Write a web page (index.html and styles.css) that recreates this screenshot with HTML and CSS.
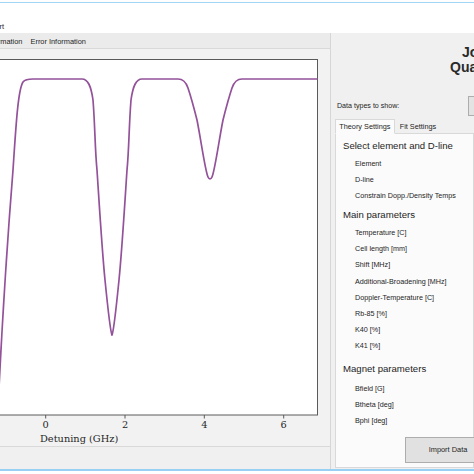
FILE: index.html
```html
<!DOCTYPE html>
<html>
<head>
<meta charset="utf-8">
<link rel="stylesheet" href="styles.css">
</head>
<body>
<div class="frame">
  <div class="menubar"><span class="menu-item">Import</span></div>
  <div class="main">
    <div class="left">
      <div class="tabbar">
        <span class="tab tab-first">Information</span>
        <span class="tab">Error Information</span>
      </div>
      <div class="pane">
        <svg class="figure" width="330" height="397" viewBox="0 49 330 397" xmlns="http://www.w3.org/2000/svg">
          <defs>
            <clipPath id="axclip"><rect x="-10" y="60" width="327.5" height="355"/></clipPath>
          </defs>
          <rect x="-10" y="59.5" width="327.5" height="355.5" fill="#ffffff" stroke="#5a5a5a" stroke-width="1"/>
          <path clip-path="url(#axclip)" fill="none" stroke="#93529a" stroke-width="1.7" stroke-linejoin="round"
            d="M -3 430 C 1 340, 9 220, 13 170 C 16 125, 18 90, 23 82 C 25 79.5, 28 79, 33 79 L 82 79 C 88 79, 91 86, 93 100 C 95 125, 95 150, 97 170 C 99 200, 102 250, 105 280 C 108 310, 110.5 332, 112 335 C 113.5 332, 116 310, 119 280 C 122 250, 125 200, 127 170 C 129 150, 129 125, 131 100 C 133 86, 136 79, 142 79 L 178 79 C 183 79, 186 82, 188 88 C 192 100, 195 112, 197 120 C 201 140, 205 170, 208 177 C 209 179.5, 211 179.5, 212 177 C 215 170, 219 140, 223 120 C 225 112, 228 100, 232 88 C 234 82, 237 79, 242 79 L 330 79"/>
          <g stroke="#5a5a5a" stroke-width="1">
            <line x1="45.7" y1="415" x2="45.7" y2="418.5"/>
            <line x1="125" y1="415" x2="125" y2="418.5"/>
            <line x1="204.3" y1="415" x2="204.3" y2="418.5"/>
            <line x1="283.7" y1="415" x2="283.7" y2="418.5"/>
          </g>
          <g class="ticklabels" text-anchor="middle">
            <text x="45.7" y="428">0</text>
            <text x="125" y="428">2</text>
            <text x="204.3" y="428">4</text>
            <text x="283.7" y="428">6</text>
          </g>
          <text class="xlabel" x="40" y="442">Detuning (GHz)</text>
        </svg>
      </div>
    </div>
    <div class="right">
      <div class="title">
        <div class="t1">Joint</div>
        <div class="t2">Quantum Centre</div>
      </div>
      <div class="datarow">
        <span class="datalabel">Data types to show:</span>
        <span class="combo"></span>
      </div>
      <div class="tabs2">
        <span class="tab2 active">Theory Settings</span>
        <span class="tab2">Fit Settings</span>
      </div>
      <div class="settings">
        <div class="grp-h h-first">Select element and D-line</div>
        <div class="items items-a">
          <div class="item">Element</div>
          <div class="item">D-line</div>
          <div class="item">Constrain Dopp./Density Temps</div>
        </div>
        <div class="grp-h h-second">Main parameters</div>
        <div class="items items-b">
          <div class="item">Temperature [C]</div>
          <div class="item">Cell length [mm]</div>
          <div class="item">Shift [MHz]</div>
          <div class="item">Additional-Broadening [MHz]</div>
          <div class="item">Doppler-Temperature [C]</div>
          <div class="item">Rb-85 [%]</div>
          <div class="item">K40 [%]</div>
          <div class="item">K41 [%]</div>
        </div>
        <div class="grp-h h-third">Magnet parameters</div>
        <div class="items items-c">
          <div class="item">Bfield [G]</div>
          <div class="item">Btheta [deg]</div>
          <div class="item">Bphi [deg]</div>
        </div>
        <div class="import-btn">Import Data</div>
      </div>
    </div>
  </div>
</div>
</body>
</html>
```

FILE: styles.css
```css
html, body {
  margin: 0;
  padding: 0;
  background: #ffffff;
}

body {
  font-family: "Liberation Sans", Arial, sans-serif;
  color: #1e1e1e;
}

.frame {
  width: 474px;
  height: 474px;
  overflow: hidden;
  padding-top: 2px;
  box-sizing: border-box;
}

.menubar {
  height: 30px;
  border-top: 1px solid #a3d6f4;
  background: #ffffff;
  overflow: hidden;
  white-space: nowrap;
}

.menu-item {
  display: block;
  margin-top: 18px;
  margin-left: -17px;
  font-size: 7.4px;
  line-height: 12px;
  color: #1e1e1e;
}

.main {
  display: flex;
  height: 436px;
  background: #f0f0f0;
  border-bottom: 2px solid #97d0f3;
}

.left {
  flex: none;
  width: 330px;
  display: flex;
  flex-direction: column;
  border-right: 1px solid #d6d6d6;
}

.tabbar {
  height: 15px;
  display: flex;
  background: #ebebeb;
  border-bottom: 1px solid #d9d9d9;
  font-size: 7.4px;
  white-space: nowrap;
  overflow: hidden;
}

.tab {
  padding: 3px 4px 0 4px;
  line-height: 12px;
  color: #1e1e1e;
}

.tab-first {
  margin-left: -18.5px;
}

.pane {
  height: 397px;
  border-bottom: 1px solid #d9d9d9;
  background: #f2f2f2;
  overflow: hidden;
}

.figure {
  display: block;
}

.ticklabels text,
.xlabel {
  font-family: "DejaVu Serif", serif;
  font-size: 9.8px;
  fill: #262626;
}

.right {
  flex: 1;
  min-width: 0;
  overflow: hidden;
  white-space: nowrap;
}

.title {
  padding-top: 11.5px;
  font-size: 14px;
  line-height: 15px;
  font-weight: bold;
  color: #2a2a2a;
}

.t1 {
  padding-left: 131px;
}

.t2 {
  padding-left: 119px;
}

.datarow {
  display: flex;
  align-items: center;
  height: 20px;
  margin-top: 21.2px;
  padding-left: 6px;
  font-size: 7.1px;
}

.datalabel {
  flex: none;
  width: 131px;
}

.combo {
  flex: none;
  width: 60px;
  height: 18px;
  border: 1px solid #adadad;
  background: #e3e3e3;
}

.tabs2 {
  display: flex;
  margin-top: 3.6px;
  margin-left: 4px;
  margin-bottom: -1px;
  font-size: 7.3px;
}

.tab2 {
  height: 11px;
  line-height: 11px;
  padding: 1px 4px 2px 4px;
  border: 1px solid transparent;
  border-bottom: none;
  color: #1e1e1e;
}

.tab2.active {
  position: relative;
  z-index: 1;
  background: #fbfbfb;
  border-color: #d9d9d9;
  border-bottom: 1px solid #fbfbfb;
  height: 11px;
  padding: 1px 3.3px 1px 3.3px;
}

.settings {
  margin-left: 4px;
  height: 328px;
  padding-top: 4.4px;
  border: 1px solid #d9d9d9;
  background: #fbfbfb;
}

.grp-h {
  font-size: 9.6px;
  line-height: 14px;
  padding-left: 7px;
  color: #1e1e1e;
}

.h-second {
  margin-top: 3.7px;
}

.h-third {
  margin-top: 8px;
}

.item {
  font-size: 7.2px;
  line-height: 16px;
  padding-left: 19px;
  color: #1e1e1e;
}

.items-a {
  margin-top: 3.6px;
}

.items-b {
  margin-top: 3.3px;
}

.items-b .item {
  line-height: 16.1px;
}

.items-c {
  margin-top: 5px;
}

.import-btn {
  margin-top: 8px;
  margin-left: 69px;
  width: 84px;
  height: 24px;
  line-height: 24px;
  border: 1px solid #adadad;
  background: #e1e1e1;
  font-size: 7.4px;
  text-align: center;
  color: #1e1e1e;
}
```
